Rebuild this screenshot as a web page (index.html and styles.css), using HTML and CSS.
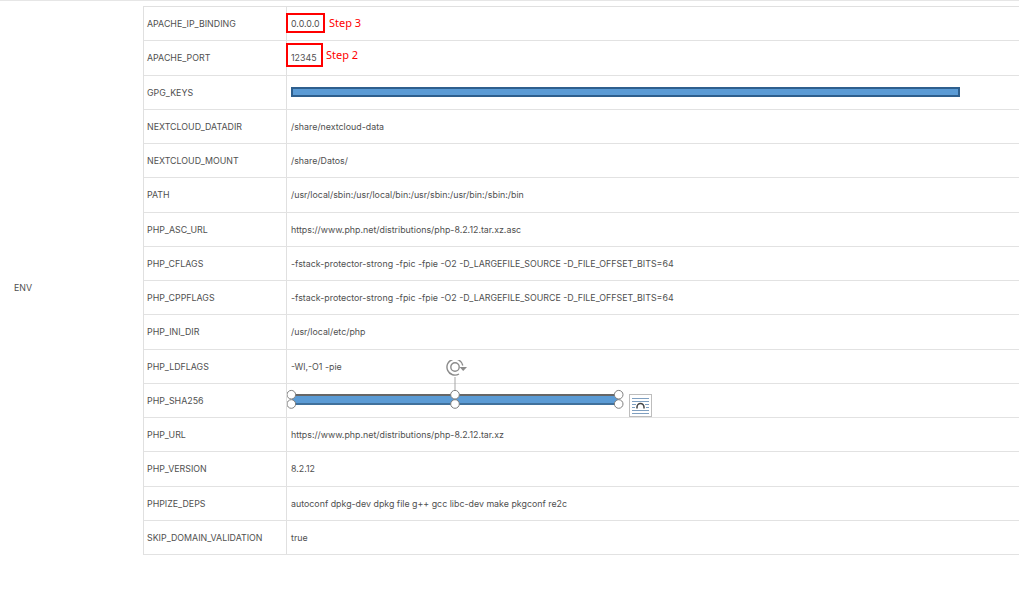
FILE: index.html
```html
<!DOCTYPE html>
<html lang="en">
<head>
<meta charset="utf-8">
<title>ENV</title>
<link rel="stylesheet" href="styles.css">
</head>
<body>
<div class="page">
  <div class="topline"></div>
  <div class="env">
    <div class="env-label">ENV</div>
    <div class="table">
      <div class="row"><div class="key">APACHE_IP_BINDING</div><div class="val">0.0.0.0</div></div>
      <div class="row"><div class="key">APACHE_PORT</div><div class="val">12345</div></div>
      <div class="row"><div class="key">GPG_KEYS</div><div class="val"></div></div>
      <div class="row"><div class="key">NEXTCLOUD_DATADIR</div><div class="val">/share/nextcloud-data</div></div>
      <div class="row"><div class="key">NEXTCLOUD_MOUNT</div><div class="val">/share/Datos/</div></div>
      <div class="row"><div class="key">PATH</div><div class="val">/usr/local/sbin:/usr/local/bin:/usr/sbin:/usr/bin:/sbin:/bin</div></div>
      <div class="row"><div class="key">PHP_ASC_URL</div><div class="val">https://www.php.net/distributions/php-8.2.12.tar.xz.asc</div></div>
      <div class="row"><div class="key">PHP_CFLAGS</div><div class="val">-fstack-protector-strong -fpic -fpie -O2 -D_LARGEFILE_SOURCE -D_FILE_OFFSET_BITS=64</div></div>
      <div class="row"><div class="key">PHP_CPPFLAGS</div><div class="val">-fstack-protector-strong -fpic -fpie -O2 -D_LARGEFILE_SOURCE -D_FILE_OFFSET_BITS=64</div></div>
      <div class="row"><div class="key">PHP_INI_DIR</div><div class="val">/usr/local/etc/php</div></div>
      <div class="row"><div class="key">PHP_LDFLAGS</div><div class="val">-Wl,-O1 -pie</div></div>
      <div class="row"><div class="key">PHP_SHA256</div><div class="val"></div></div>
      <div class="row"><div class="key">PHP_URL</div><div class="val">https://www.php.net/distributions/php-8.2.12.tar.xz</div></div>
      <div class="row"><div class="key">PHP_VERSION</div><div class="val">8.2.12</div></div>
      <div class="row"><div class="key">PHPIZE_DEPS</div><div class="val">autoconf dpkg-dev dpkg file g++ gcc libc-dev make pkgconf re2c</div></div>
      <div class="row"><div class="key">SKIP_DOMAIN_VALIDATION</div><div class="val">true</div></div>
    </div>
  </div>

  <div class="redbox box-ip"></div>
  <div class="redbox box-port"></div>
  <div class="step step-3">Step 3</div>
  <div class="step step-2">Step 2</div>
  <div class="bar bar-gpg"></div>
  <div class="bar bar-sha"></div>

  <svg class="selection" width="380" height="60" viewBox="0 0 380 60" aria-hidden="true">
    <path class="sel-stem" d="M168 17V31"/>
    <path class="sel-rot" d="M175.800 5.500A8 8 0 1 0 172 14"/>
    <circle class="sel-rot" cx="168" cy="7" r="4.200"/>
    <path class="sel-arrow" d="M172.500 7H180L176.200 11Z"/>
    <circle class="sel-h" cx="4.300" cy="34.700" r="4.300"/>
    <circle class="sel-h" cx="168" cy="34.700" r="4.300"/>
    <circle class="sel-h" cx="331.700" cy="34.700" r="4.300"/>
    <circle class="sel-h" cx="4.300" cy="44" r="4.300"/>
    <circle class="sel-h" cx="168" cy="44" r="4.300"/>
    <circle class="sel-h" cx="331.700" cy="44" r="4.300"/>
  </svg>

  <svg class="layout-btn" width="23" height="23" viewBox="0 0 23 23" aria-hidden="true">
    <rect class="lb-frame" x="0.500" y="0.500" width="22" height="22"/>
    <path class="lb-lines" d="M3 4.500H20M3 7.500H20M3 10.500H7M16 10.500H20M3 13.500H6M17 13.500H20M3 16.500H20M3 19.500H20"/>
    <path class="lb-arc" d="M8 14.500V13A3.500 3.500 0 0 1 15 13V14.500"/>
  </svg>
</div>
</body>
</html>
```
FILE: styles.css
```css
* { box-sizing: border-box; }
html, body { margin: 0; padding: 0; background: #fff; }
body { font-family: Inter, "Liberation Sans", sans-serif; font-size: 8.850px; color: #505050; }
.page { position: relative; width: 1035px; height: 592px; overflow: hidden; }
.topline { width: 1019px; height: 1px; background: #e6e6e6; }
.env { display: flex; align-items: center; width: 1019px; margin-top: 5px; }
.env-label { width: 143px; padding: 14px 0 0 14px; }
.table { flex: 1; border: 1px solid #e0e0e0; border-right: 0; border-bottom: 0; }
.row { display: flex; height: 34.250px; border-bottom: 1px solid #e2e2e2; }
.key { width: 143px; padding: 0 3px; display: flex; align-items: center; border-right: 1px solid #e0e0e0; }
.val { flex: 1; padding: 0 4px; display: flex; align-items: center; }
.redbox { position: absolute; border: 2px solid #f00; }
.box-ip { left: 286px; top: 13px; width: 39px; height: 20px; }
.box-port { left: 286px; top: 43px; width: 37px; height: 24px; }
.step { position: absolute; color: #f00; font-family: "Noto Sans", sans-serif; font-size: 11px; line-height: 16px; }
.step-3 { left: 329px; top: 15px; }
.step-2 { left: 326px; top: 47px; }
.bar { position: absolute; background: #5b9bd5; }
.bar-gpg { left: 291px; top: 87px; width: 669px; height: 10px; border: 2px solid #2e5f8e; }
.bar-sha { left: 292px; top: 394px; width: 327px; height: 11px; border-top: 2px solid #666; border-bottom: 2px solid #41719c; }
.selection { position: absolute; left: 287px; top: 360px; }
.sel-stem { stroke: #a5a5a5; fill: none; }
.sel-rot { stroke: #8c8c8c; stroke-width: 1.400; fill: none; }
.sel-arrow { fill: #8c8c8c; }
.sel-h { fill: #fff; stroke: #7f7f7f; stroke-width: 1; }
.layout-btn { position: absolute; left: 629px; top: 394px; }
.lb-frame { fill: #fff; stroke: #bdbdbd; }
.lb-lines { stroke: #7f9fc0; fill: none; }
.lb-arc { stroke: #444; stroke-width: 1.500; fill: none; }
```
